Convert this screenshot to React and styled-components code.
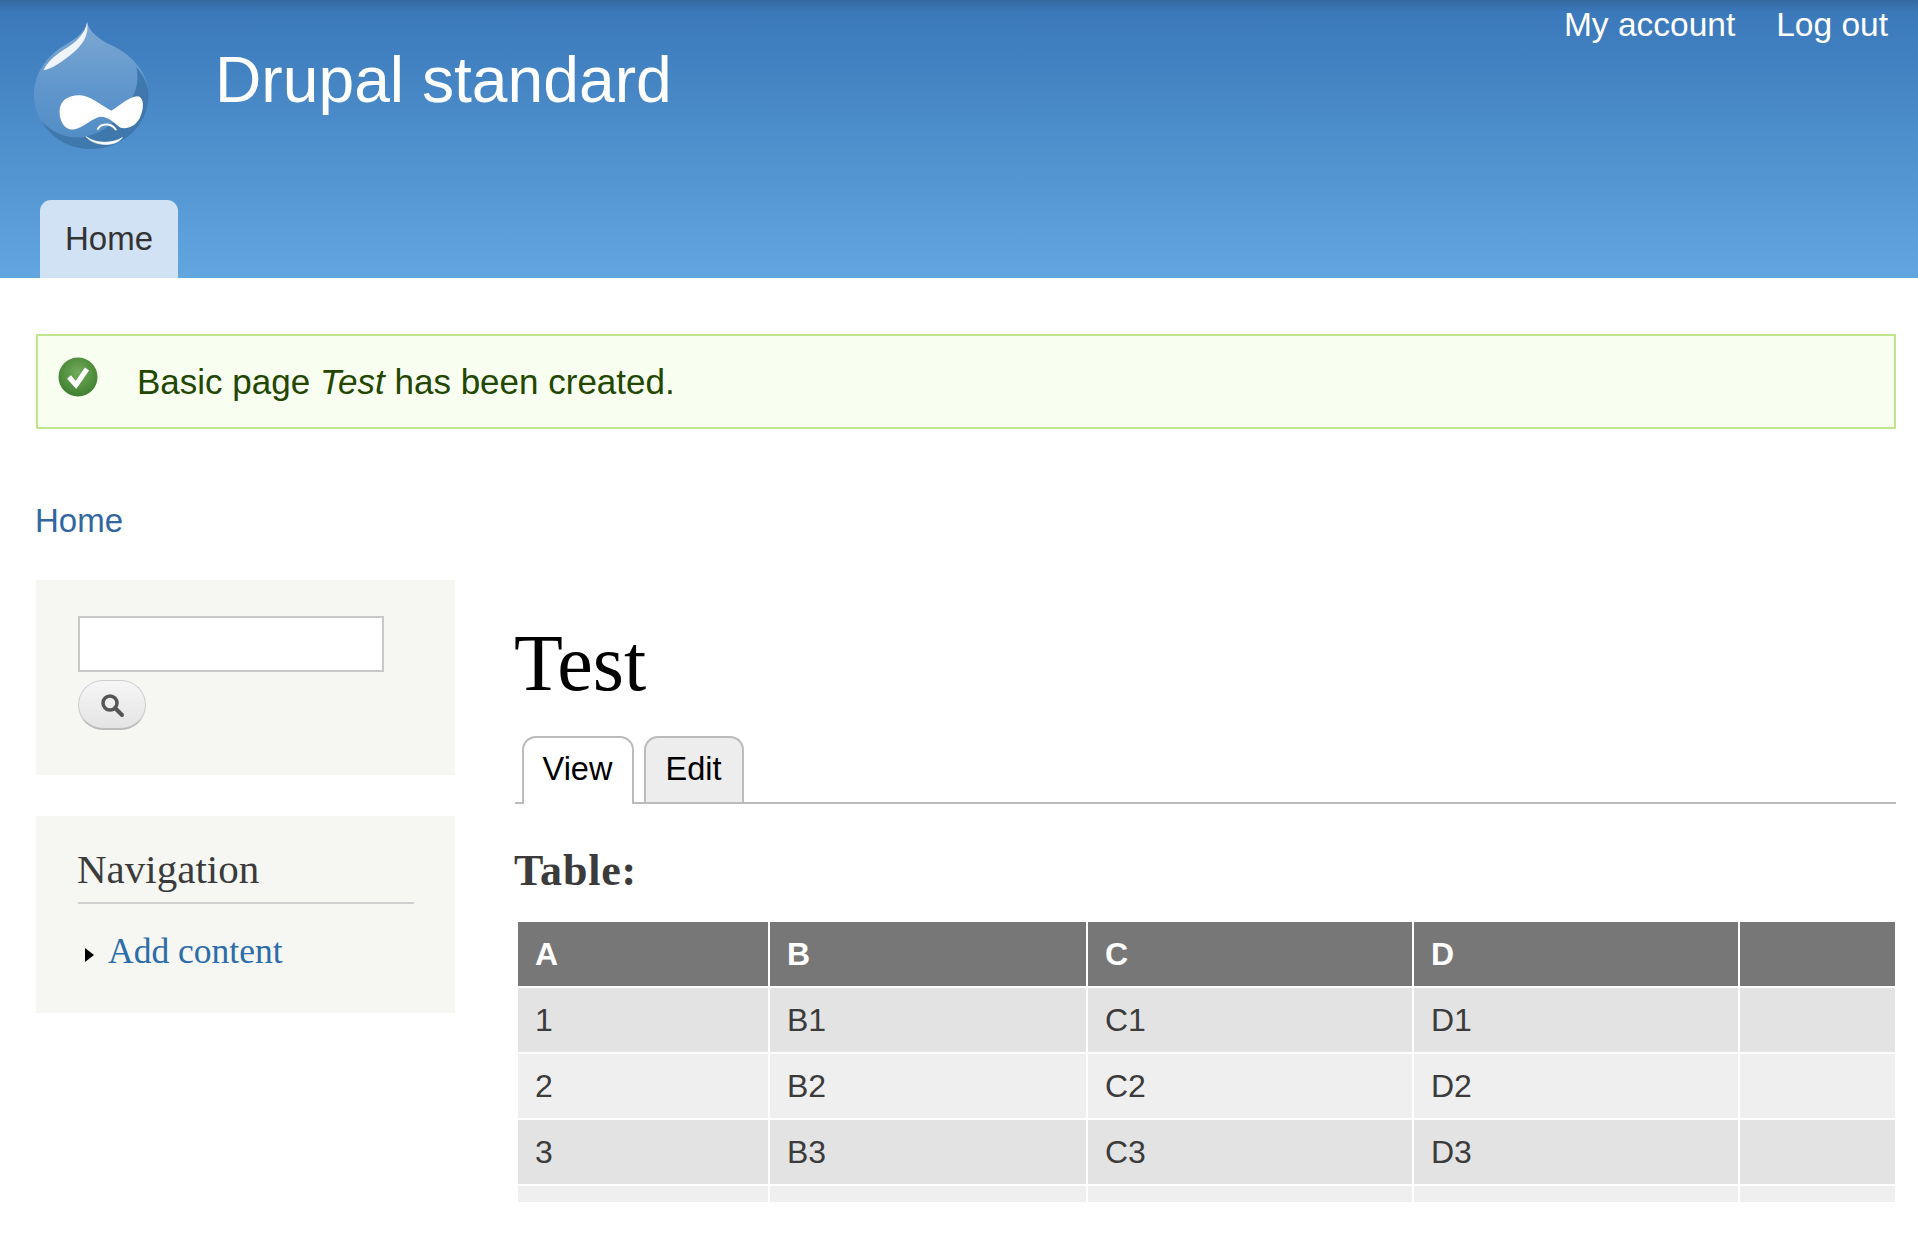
import React from 'react';
import styled, { createGlobalStyle } from 'styled-components';

const Global = createGlobalStyle`
  html, body { margin: 0; padding: 0; background: #fff; }
  body { font-family: "Liberation Sans", Arial, sans-serif; color: #3b3b3b; }
  * { box-sizing: border-box; }
`;

const Header = styled.header`
  height: 278px;
  display: flex;
  flex-direction: column;
  background: linear-gradient(to bottom, #35689f 0, #3b79ba 12px, #62a6e0 100%);
`;
const HeaderTop = styled.div`
  height: 200px;
  display: flex;
  justify-content: space-between;
  align-items: flex-start;
`;
const Branding = styled.div`
  display: flex;
  align-items: flex-start;
  padding: 21px 0 0 34px;
`;
const SiteName = styled.h1`
  margin: 21px 0 0 66px;
  font-size: 64.2px;
  line-height: 76px;
  font-weight: 400;
  color: #fff;
`;
const SecondaryMenu = styled.nav`
  display: flex;
  gap: 41px;
  padding: 5px 30px 0 0;
`;
const SecondaryLink = styled.a`
  font-size: 33.5px;
  line-height: 40px;
  color: #fff;
`;
const MainMenu = styled.nav`
  display: flex;
  padding-left: 40px;
`;
const MainMenuTab = styled.a`
  width: 138px;
  height: 78px;
  text-align: center;
  font-size: 33px;
  line-height: 78px;
  color: #333;
  background: #d0e2f4;
  border-radius: 11px 11px 0 0;
`;

const Page = styled.div`
  padding: 56px 22px 0 36px;
`;
const Message = styled.div`
  height: 95px;
  display: flex;
  align-items: flex-start;
  padding: 23px 20px 0 20px;
  gap: 39px;
  border: 2px solid #bfe68c;
  background: #f8fff0;
  color: #234600;
  font-size: 35px;
  line-height: 46px;
`;
const Breadcrumb = styled.a`
  display: block;
  margin-top: 72px;
  font-size: 33px;
  line-height: 40px;
  color: #33669f;
  text-indent: -1px;
`;
const Columns = styled.div`
  display: flex;
  gap: 59px;
  margin-top: 39px;
`;
const Sidebar = styled.aside`
  flex: 0 0 419px;
  display: flex;
  flex-direction: column;
  gap: 41px;
`;
const Block = styled.section`
  background: #f6f6f2;
  padding: ${p => p.$pad};
  height: ${p => p.$h}px;
`;
const SearchInput = styled.input`
  display: block;
  width: 306px;
  height: 56px;
  border: 2px solid #c8c8c8;
  background: #fff;
  padding: 0;
`;
const SearchButton = styled.button`
  display: flex;
  align-items: center;
  justify-content: center;
  width: 68px;
  height: 50px;
  margin-top: 8px;
  padding: 0;
  border: 1px solid #ccc;
  border-bottom: 2px solid #bbb;
  border-radius: 25px;
  background: linear-gradient(to bottom, #f6f6f6, #e4e4e4);
`;
const BlockTitle = styled.h2`
  margin: 0;
  padding-bottom: 10px;
  border-bottom: 2px solid #d0d0d0;
  font-family: "Liberation Serif", "Times New Roman", serif;
  font-size: 41px;
  line-height: 46px;
  font-weight: 400;
  color: #3b3b3b;
  text-indent: -1px;
`;
const MenuItem = styled.div`
  display: flex;
  align-items: center;
  margin-top: 26px;
  padding-left: 7px;
`;
const Arrow = styled.span`
  width: 0;
  height: 0;
  margin: 8px 14px 0 0;
  border-top: 7px solid transparent;
  border-bottom: 7px solid transparent;
  border-left: 9px solid #000;
`;
const MenuLink = styled.a`
  font-family: "Liberation Serif", "Times New Roman", serif;
  font-size: 35.5px;
  line-height: 42px;
  color: #2b6ca9;
`;
const Main = styled.main`
  flex: 1;
  min-width: 0;
`;
const PageTitle = styled.h1`
  margin: 39px 0 0;
  font-family: "Liberation Serif", "Times New Roman", serif;
  font-size: 80px;
  line-height: 88px;
  font-weight: 400;
  color: #000;
`;
const Tabs = styled.div`
  display: flex;
  gap: 10px;
  height: 68px;
  margin-top: 29px;
  padding-left: 7px;
  border-bottom: 2px solid #bbb;
  margin-left: 1px;
`;
const Tab = styled.a`
  width: ${p => p.$w}px;
  height: ${p => (p.$active ? 68 : 66)}px;
  padding-right: 1px;
  border: 2px solid #bbb;
  border-bottom: 0;
  border-radius: 14px 14px 0 0;
  background: ${p => (p.$active ? '#fff' : '#ededed')};
  color: #000;
  font-size: 32.5px;
  line-height: 62px;
  text-align: center;
`;
const FieldLabel = styled.h3`
  margin: 42px 0 0;
  font-family: "Liberation Serif", "Times New Roman", serif;
  font-size: 44px;
  line-height: 50px;
  font-weight: 700;
  letter-spacing: 0.8px;
  color: #3b3b3b;
`;
const DataTable = styled.table`
  width: 1381px;
  margin: 24px 0 0 2px;
  border-collapse: separate;
  border-spacing: 2px;
  table-layout: fixed;
  font-size: 32px;
`;
const Th = styled.th`
  height: 64px;
  padding: 0 0 0 17px;
  background: #777;
  color: #fff;
  text-align: left;
  font-weight: 700;
`;
const Td = styled.td`
  height: ${p => p.$h || 64}px;
  padding: 0 0 0 17px;
  background: ${p => (p.$even ? '#efefef' : '#e3e3e3')};
  color: #3b3b3b;
`;

const DrupalLogo = () => (
  <svg width="115" height="129" viewBox="42 30 342 382" style={{ display: 'block', flex: 'none' }}>
    <defs>
      <linearGradient id="dropFill" x1="0" y1="0" x2="0" y2="1">
        <stop offset="0" stopColor="#7fa8d2" />
        <stop offset="0.5" stopColor="#6097cd" />
        <stop offset="1" stopColor="#4f8cc4" />
      </linearGradient>
    </defs>
    <path d="M200 32C205 60 235 85 280 105C340 135 383 190 383 250C383 340 305 410 212 410C120 410 42 340 42 250C42 180 85 130 135 100C170 80 195 60 200 32Z" fill="url(#dropFill)" />
    <path d="M345 165C372 195 383 225 383 250C383 340 305 410 212 410C150 410 95 380 62 325C100 365 140 378 185 375C250 365 300 320 330 265C350 230 355 195 345 165Z" fill="#3f78ad" />
    <path d="M200 32C196 66 165 95 130 115C100 135 82 152 70 176C95 172 130 148 160 122C186 100 206 72 200 32Z" fill="#eef4fa" />
    <path d="M118 298C118 262 150 248 180 250C215 253 245 283 272 296C295 283 325 253 350 253C370 256 370 290 357 317C344 342 320 352 300 347C285 337 265 314 240 314C215 317 190 347 160 352C135 354 118 330 118 298Z" fill="#fff" />
    <path d="M232 350C240 335 270 330 285 352" fill="none" stroke="#fff" strokeWidth="6" strokeLinecap="round" />
    <path d="M197 373C225 395 275 395 305 376C285 405 220 402 197 373Z" fill="#fff" stroke="#fff" strokeWidth="2" />
  </svg>
);

const CheckIcon = () => (
  <svg width="40" height="40" viewBox="0 0 40 40" style={{ display: 'block', flex: 'none', marginTop: '-2px' }}>
    <defs>
      <radialGradient id="okFill" cx="0.5" cy="0.4" r="0.6">
        <stop offset="0" stopColor="#74ad5c" />
        <stop offset="1" stopColor="#3f7f30" />
      </radialGradient>
    </defs>
    <circle cx="20" cy="20" r="19.5" fill="url(#okFill)" />
    <path d="M11 20l7 8L29 12" fill="none" stroke="#fff" strokeWidth="5" />
  </svg>
);

const SearchIcon = () => (
  <svg width="26" height="26" viewBox="0 0 26 26">
    <circle cx="11" cy="11" r="7" fill="none" stroke="#555" strokeWidth="3.5" />
    <path d="M16 16l7 7" stroke="#555" strokeWidth="4" strokeLinecap="round" />
  </svg>
);

const columns = [250, 316, 324, 324, 155];
const rows = [['1', 'B1', 'C1', 'D1', ''], ['2', 'B2', 'C2', 'D2', ''], ['3', 'B3', 'C3', 'D3', '']];

export default function App() {
  return (
    <>
      <Global />
      <Header>
        <HeaderTop>
          <Branding>
            <DrupalLogo />
            <SiteName>Drupal standard</SiteName>
          </Branding>
          <SecondaryMenu>
            <SecondaryLink>My account</SecondaryLink>
            <SecondaryLink>Log out</SecondaryLink>
          </SecondaryMenu>
        </HeaderTop>
        <MainMenu>
          <MainMenuTab>Home</MainMenuTab>
        </MainMenu>
      </Header>
      <Page>
        <Message>
          <CheckIcon />
          <span>Basic page <em>Test</em> has been created.</span>
        </Message>
        <Breadcrumb>Home</Breadcrumb>
        <Columns>
          <Sidebar>
            <Block $pad="36px 42px 0" $h={195}>
              <SearchInput type="text" aria-label="Search" />
              <SearchButton aria-label="Search"><SearchIcon /></SearchButton>
            </Block>
            <Block $pad="30px 41px 0 42px" $h={197}>
              <BlockTitle>Navigation</BlockTitle>
              <MenuItem>
                <Arrow />
                <MenuLink>Add content</MenuLink>
              </MenuItem>
            </Block>
          </Sidebar>
          <Main>
            <PageTitle>Test</PageTitle>
            <Tabs>
              <Tab $active $w={112}>View</Tab>
              <Tab $w={100}>Edit</Tab>
            </Tabs>
            <FieldLabel>Table:</FieldLabel>
            <DataTable>
              <colgroup>
                {columns.map((w, i) => <col key={i} style={{ width: w }} />)}
              </colgroup>
              <thead>
                <tr>{['A', 'B', 'C', 'D', ''].map((h, i) => <Th key={i}>{h}</Th>)}</tr>
              </thead>
              <tbody>
                {rows.map((r, i) => (
                  <tr key={i}>{r.map((c, j) => <Td key={j} $even={i % 2 === 1}>{c}</Td>)}</tr>
                ))}
                <tr>{columns.map((_, j) => <Td key={j} $even $h={16} />)}</tr>
              </tbody>
            </DataTable>
          </Main>
        </Columns>
      </Page>
    </>
  );
}
